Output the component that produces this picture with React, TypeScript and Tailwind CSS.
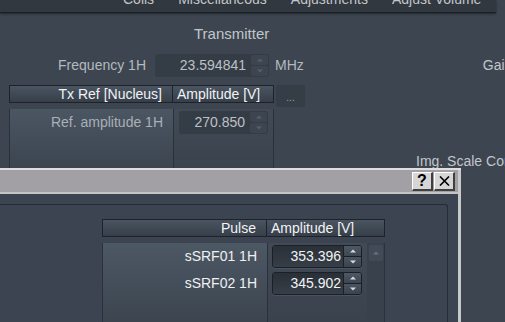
import React from "react";

function Arrow({ up, color }: { up?: boolean; color: string }) {
  return (
    <svg width="6" height="4" viewBox="0 0 6 4">
      {up ? <polygon points="0,3.5 3,0.5 6,3.5" fill={color} /> : <polygon points="0,0.5 3,3.5 6,0.5" fill={color} />}
    </svg>
  );
}

function DisabledSpin({ value, textClass }: { value: string; textClass: string }) {
  return (
    <div className="flex h-[23px] shrink-0">
      <div className={`${textClass} shrink-0 h-full rounded-l-[3px] bg-[#343c45] flex items-center justify-end pr-[4px] text-[#bdc1c5]`}>
        {value}
      </div>
      <div className="w-[19px] shrink-0 h-full flex flex-col gap-[1px] bg-[#343c45] rounded-r-[3px] p-[1px]">
        <div className="flex-1 bg-[#3d4650] rounded-[2px] flex items-center justify-center">
          <Arrow up color="#56606a" />
        </div>
        <div className="flex-1 bg-[#3d4650] rounded-[2px] flex items-center justify-center">
          <Arrow color="#56606a" />
        </div>
      </div>
    </div>
  );
}

function Spin({ value }: { value: string }) {
  return (
    <div className="flex h-[23px] w-[90px] shrink-0 rounded-[3px] border border-[#1b2026] shadow-[0_1px_0_#4a5360]">
      <div className="w-[70px] shrink-0 h-full rounded-l-[2px] bg-gradient-to-b from-[#2a3038] to-[#363e47] flex items-center justify-end pr-[2px] text-[#f0f2f4]">
        {value}
      </div>
      <div className="w-[18px] shrink-0 h-full flex flex-col border-l border-[#1b2026]">
        <div className="flex-1 bg-gradient-to-b from-[#4e5966] to-[#3d4651] border-b border-[#1b2026] rounded-tr-[2px] flex items-center justify-center">
          <Arrow up color="#d8dce0" />
        </div>
        <div className="flex-1 bg-gradient-to-b from-[#4a5562] to-[#3a434d] rounded-br-[2px] flex items-center justify-center">
          <Arrow color="#d8dce0" />
        </div>
      </div>
    </div>
  );
}

export default function App() {
  return (
    <div className="relative w-[505px] h-[322px] overflow-hidden bg-[#3c4550] font-['Liberation_Sans',Arial,sans-serif] text-[14px] whitespace-nowrap">
      {/* top tab bar */}
      <div className="flex h-[13px] w-[496px] bg-[#31383f] border-b border-[#1a1f24] shadow-[0_1px_2px_rgba(0,0,0,0.45)]">
        <div className="flex gap-[24px] pl-[123px] -mt-[9px] h-[16px] leading-4 text-[#c2c6ca]">
          <span>Coils</span>
          <span>Miscellaneous</span>
          <span>Adjustments</span>
          <span>Adjust Volume</span>
        </div>
      </div>

      {/* Transmitter title */}
      <div className="mt-[12px] pl-[194px] text-[15px] leading-[17px] text-[#c2c6ca]">Transmitter</div>

      {/* Frequency row */}
      <div className="mt-[12px] flex items-center h-[23px] text-[#b4b9be]">
        <div className="w-[146px] shrink-0 text-right">Frequency 1H</div>
        <div className="ml-[9px] shrink-0">
          <DisabledSpin value="23.594841" textClass="w-[95px]" />
        </div>
        <div className="ml-[6px] shrink-0">MHz</div>
        <div className="ml-[179px] shrink-0 text-[#c2c6ca]">Gain</div>
      </div>

      {/* Tx ref table + right column */}
      <div className="mt-[8px] flex">
        <div className="ml-[9px] shrink-0">
          <div className="flex items-start h-[22px]">
            <div className="flex shrink-0 h-[18px] border border-[#1d2329] bg-gradient-to-b from-[#4a5561] to-[#363f49] text-[#f2f3f4] leading-[16px]">
              <div className="w-[163px] shrink-0 text-right pr-[10px] border-r border-[#1d2329]">Tx Ref [Nucleus]</div>
              <div className="w-[100px] shrink-0 pl-[4px]">Amplitude [V]</div>
            </div>
            <div className="ml-[2px] shrink-0 w-[29px] h-[22px] rounded-[3px] bg-[#353d46] flex items-center justify-center text-[10px] text-[#9ba1a7] pt-[3px]">
              ...
            </div>
          </div>
          <div className="mt-[2px] flex h-[70px]">
            <div className="w-[164px] shrink-0 border-l border-[#2a3138] bg-gradient-to-b from-[#4b5663] to-[#39424c] pt-[2px]">
              <div className="h-[23px] flex items-center justify-end pr-[10px] text-[#a9afb5]">Ref. amplitude 1H</div>
            </div>
            <div className="w-[101px] shrink-0 border-l border-r border-[#2a3138] bg-gradient-to-b from-[#414a55] to-[#39424c] pt-[2px] pl-[5px]">
              <DisabledSpin value="270.850" textClass="w-[70px]" />
            </div>
          </div>
        </div>
        <div className="ml-[111px] shrink-0 pt-[68px] leading-4 text-[#c2c6ca]">Img. Scale Correction</div>
      </div>

      {/* dialog window */}
      <div className="absolute left-0 top-[168px] w-[461px] h-[160px] border-t-2 border-[#dedede] flex flex-col">
        <div className="flex-1 flex flex-col border-r-[3px] border-[#c9c9c9]">
          <div className="h-[24px] bg-[#a2a0a4] flex items-center justify-end pr-[3px] gap-[1px] border-b-2 border-[#c4c4c4]">
            <div className="w-[21px] h-[19px] bg-[#d6d6d6] border-t border-l border-[#ffffff] border-r-2 border-b-2 border-r-[#404040] border-b-[#404040] flex items-center justify-center font-bold text-[16px] leading-none text-black">
              ?
            </div>
            <div className="w-[21px] h-[19px] bg-[#d6d6d6] border-t border-l border-[#ffffff] border-r-2 border-b-2 border-r-[#404040] border-b-[#404040] flex items-center justify-center">
              <svg width="11" height="10" viewBox="0 0 11 10">
                <path d="M1 0.5 L10 9.5 M10 0.5 L1 9.5" stroke="#000" strokeWidth="1.6" />
              </svg>
            </div>
          </div>
          <div className="flex-1 bg-[#3b4450] pt-[10px] pr-[10px]">
            <div className="h-full -ml-[6px] border-t border-r border-[#262c33] rounded-tr-[3px] pt-[14px]">
              <div className="ml-[108px] w-[283px]">
                <div className="flex h-[18px] border border-[#1d2329] bg-gradient-to-b from-[#4a5561] to-[#363f49] text-[#f2f3f4] leading-[16px]">
                  <div className="w-[164px] shrink-0 text-right pr-[10px] border-r border-[#1d2329]">Pulse</div>
                  <div className="flex-1 pl-[4px]">Amplitude [V]</div>
                </div>
                <div className="mt-[6px] flex h-[90px]">
                  <div className="w-[165px] shrink-0 border-l border-[#2a3138] bg-gradient-to-b from-[#4d5865] to-[#39424c] pt-[2px] flex flex-col gap-[4px]">
                    <div className="h-[23px] flex items-center justify-end pr-[10px] text-[#eef0f2]">sSRF01 1H</div>
                    <div className="h-[23px] flex items-center justify-end pr-[10px] text-[#eef0f2]">sSRF02 1H</div>
                  </div>
                  <div className="w-[100px] shrink-0 border-l border-[#2a3138] bg-gradient-to-b from-[#414a55] to-[#39424c] pt-[2px] pl-[4px] flex flex-col gap-[4px]">
                    <Spin value="353.396" />
                    <Spin value="345.902" />
                  </div>
                  <div className="flex-1 border-r border-[#2a3138] bg-[#39424c] pt-[2px] pl-[2px]">
                    <div className="w-[14px] h-[16px] bg-[#414a55] rounded-[2px] flex items-center justify-center">
                      <Arrow up color="#6a737d" />
                    </div>
                  </div>
                </div>
              </div>
            </div>
          </div>
        </div>
      </div>
    </div>
  );
}
